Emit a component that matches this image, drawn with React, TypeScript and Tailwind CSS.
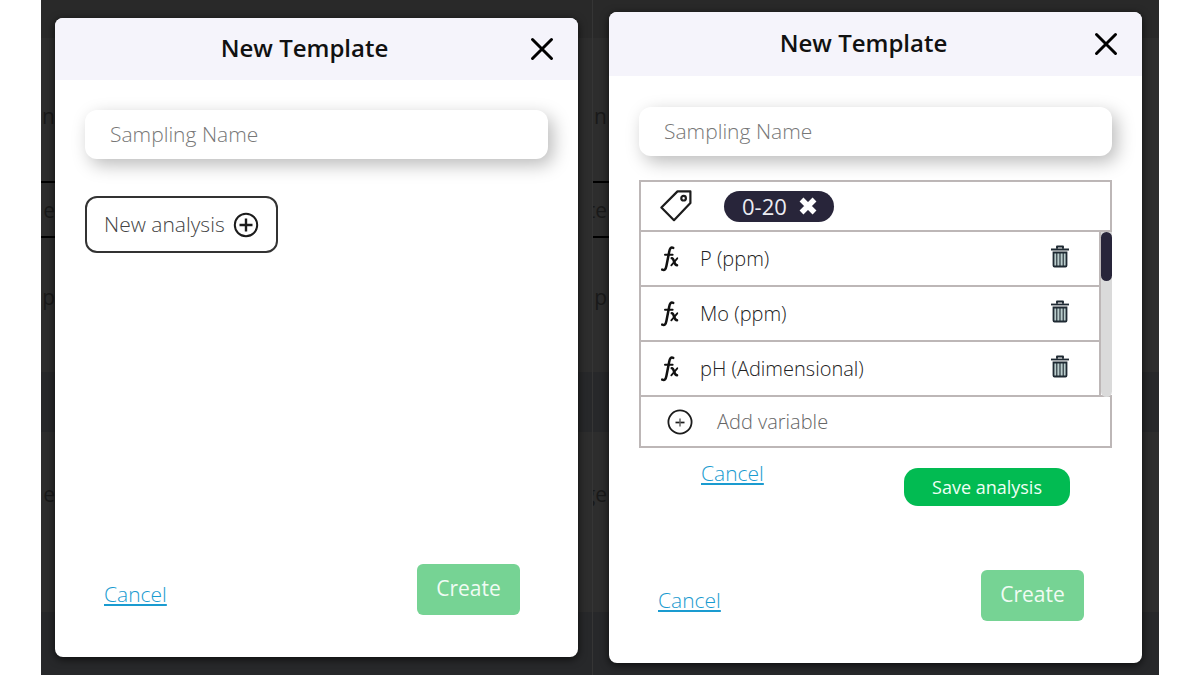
import type { ReactNode } from "react";
import { clsx } from "clsx";

const VARIABLES = ["P (ppm)", "Mo (ppm)", "pH (Adimensional)"];

function CloseIcon() {
  return (
    <svg viewBox="0 0 24 24" className="size-6" fill="none" stroke="#000" strokeWidth="3" strokeLinecap="round">
      <path d="M2.5 2.5l19 19M21.5 2.5l-19 19" />
    </svg>
  );
}

function PlusCircleIcon() {
  return (
    <svg viewBox="0 0 26 26" className="size-[26px]" fill="none" stroke="#1c1c1c">
      <circle cx="13" cy="13" r="11.2" strokeWidth="2" />
      <path d="M13 6.5v13M6.5 13h13" strokeWidth="2.4" />
    </svg>
  );
}

function SmallPlusCircleIcon() {
  return (
    <svg viewBox="0 0 26 26" className="size-[26px]" fill="none" stroke="#1c1c1c">
      <circle cx="13" cy="13" r="11.6" strokeWidth="1.8" />
      <path d="M8.5 13.5h9" strokeWidth="1.7" />
      <path d="M13 9.5v8" strokeWidth="1.5" stroke="#666" />
    </svg>
  );
}

function TagIcon() {
  return (
    <svg viewBox="0 0 32 32" className="size-8" fill="none" stroke="#1c1c1c" strokeWidth="2.2" strokeLinejoin="round">
      <path d="M1.4 17.5L17.5 1.4H30.4V13L14 30.200z" />
      <circle cx="23.600" cy="8.200" r="2.300" />
    </svg>
  );
}

function FunctionIcon() {
  return (
    <svg viewBox="0 0 18 26" className="h-[26px] w-[18px]" fill="none" stroke="#111" strokeLinecap="round">
      <path d="M1.2 23.600c2.600 1 3.600-.6 4.200-3.600L8.200 5.800C8.800 2.400 10 .9 12.200 1.900" strokeWidth="2.500" />
      <path d="M4 8.800h7.600" strokeWidth="2" />
      <path d="M10.800 12.300c2.400-.6 2 7 5.200 7" strokeWidth="2.600" />
      <path d="M16.300 12.300l-6 7" strokeWidth="1.800" />
    </svg>
  );
}

function TrashIcon() {
  return (
    <svg viewBox="0 0 18 23" className="h-[23px] w-[18px]" fill="none" stroke="#1f2a33">
      <path d="M6 3.800V1.500h6v2.300" strokeWidth="1.900" strokeLinejoin="round" />
      <path d="M0 4.500h18" strokeWidth="1.800" />
      <path d="M2.500 7.500h13v13q0 1-1 1h-11q-1 0-1-1z" strokeWidth="1.800" fill="#b9cccb" />
      <path d="M5.800 8v13M9 8v13M12.200 8v13" strokeWidth="1.100" />
    </svg>
  );
}

// Page behind the dialog, dimmed down to almost nothing
function Backdrop({ words, className }: { words: string[]; className?: string }) {
  return (
    <div
      aria-hidden="true"
      className={clsx("absolute inset-0 flex flex-col overflow-hidden bg-[#2d2d2d] text-[21px] leading-8 text-[#191919]", className)}
    >
      <div className="h-[38px] bg-[#292929]" />
      <div className="flex h-[143px] w-3.5 items-center justify-end overflow-hidden pt-3">{words[0]}</div>
      <div className="flex h-[57px] w-8 items-center border-y-2 border-black">
        <span className="flex w-3.5 justify-end overflow-hidden">{words[1]}</span>
      </div>
      <div className="flex h-[134px] w-3.5 items-center justify-end overflow-hidden pb-4">{words[2]}</div>
      <div className="h-[60px] bg-[#27282a]" />
      <div className="flex h-[180px] w-3.5 items-start justify-end overflow-hidden pt-[46px]">{words[3]}</div>
      <div className="grow bg-[#27282a]" />
    </div>
  );
}

function Dialog({ titleId, headerClass, children }: { titleId: string; headerClass: string; children: ReactNode }) {
  return (
    <section
      role="dialog"
      aria-labelledby={titleId}
      className="relative flex grow flex-col overflow-hidden rounded-lg bg-white shadow-[0_2px_8px_rgba(0,0,0,0.7)]"
    >
      <header className={clsx("flex items-center bg-[#f5f4fb] pr-6 pl-6", headerClass)}>
        <h2 id={titleId} className="grow pb-0.5 text-center text-2xl font-semibold text-[#111]">
          New Template
        </h2>
        <button type="button" aria-label="Close">
          <CloseIcon />
        </button>
      </header>
      {children}
    </section>
  );
}

function NameInput({ id }: { id: string }) {
  return (
    <>
      <label htmlFor={id} className="sr-only">
        Sampling Name
      </label>
      <input
        id={id}
        type="text"
        placeholder="Sampling Name"
        className="h-[49px] w-full rounded-xl bg-white px-[25px] pb-0.5 text-[21px] font-light shadow-[5px_6px_18px_rgba(0,0,0,0.27)] outline-none placeholder:text-[#777]"
      />
    </>
  );
}

function CancelLink() {
  return (
    <a href="#" className="text-[21px] leading-[30px] font-light text-[#1a9bd0] underline decoration-2 underline-offset-2">
      Cancel
    </a>
  );
}

function Footer() {
  return (
    <footer className="mt-auto flex items-center justify-between pr-[58px] pb-[42px] pl-[49px]">
      <div className="pt-2">
        <CancelLink />
      </div>
      <button type="button" className="h-[51px] w-[103px] rounded-md bg-[#76d394] pb-0.5 text-[21px] text-[#f0fbf3]">
        Create
      </button>
    </footer>
  );
}

function AnalysisEditor() {
  return (
    <div className="mt-6">
      <div className="flex h-[52px] items-center border-2 border-[#bdb7b7] pl-[19px]">
        <TagIcon />
        <span className="ml-8 flex h-[31px] items-center gap-3 rounded-full bg-[#28253a] pr-[17px] pl-[18px] text-[22px] text-[#ececf2]">
          0-20
          <button type="button" aria-label="Remove 0-20">
            <svg viewBox="0 0 18 18" className="size-[18px]" fill="none" stroke="#fff" strokeWidth="5.5">
              <path d="M2.500 2.500l13 13M15.500 2.500l-13 13" />
            </svg>
          </button>
        </span>
      </div>
      <div className="flex">
        <ul className="grow">
          {VARIABLES.map((name) => (
            <li key={name} className="flex h-[55px] items-center border-x-2 border-b-2 border-[#bdb7b7] pr-[30px] pl-5">
              <FunctionIcon />
              <span className="ml-[21px] grow text-xl font-light text-[#222]">{name}</span>
              <button type="button" aria-label={`Delete ${name}`} className="pb-1">
                <TrashIcon />
              </button>
            </li>
          ))}
        </ul>
        <div className="w-[11px] rounded-b-full bg-[#dadada]">
          <div className="h-[49px] rounded-full bg-[#28253a]" />
        </div>
      </div>
      {/* top border closes the box under the scrollbar */}
      <button
        type="button"
        className="-mt-0.5 flex h-[53px] w-full items-center gap-6 border-2 border-[#bdb7b7] pl-[26px] text-xl font-light text-[#666]"
      >
        <SmallPlusCircleIcon />
        Add variable
      </button>
      <div className="flex items-start justify-between pt-[10px] pr-[42px] pl-[62px]">
        <CancelLink />
        <button type="button" className="mt-[10px] h-[38px] w-[166px] rounded-[14px] bg-[#02bb52] text-lg text-[#f0fff5]">
          Save analysis
        </button>
      </div>
    </div>
  );
}

export default function App() {
  return (
    <main className="grid min-h-screen grid-cols-[551fr_567fr] bg-white px-[41px] font-['Open_Sans','Noto_Sans',sans-serif]">
      <div className="relative flex px-[14px] py-[18px]">
        <Backdrop words={["n", "e", "p", "e"]} />
        <Dialog titleId="template-title" headerClass="h-[62px]">
          <div className="px-[30px] pt-[30px]">
            <NameInput id="sampling-name" />
            <button
              type="button"
              className="mt-[37px] flex h-[57px] items-center gap-2 rounded-xl border-2 border-[#333] px-[17px] text-[21px] font-light text-[#444]"
            >
              New analysis
              <PlusCircleIcon />
            </button>
          </div>
          <Footer />
        </Dialog>
      </div>
      <div className="relative flex px-[17px] py-3">
        <Backdrop words={["n", "te", "np", "ge"]} className="border-l border-[#353535]" />
        <Dialog titleId="template-edit-title" headerClass="h-16">
          <div className="px-[30px] pt-[31px]">
            <NameInput id="sampling-name-edit" />
            <AnalysisEditor />
          </div>
          <Footer />
        </Dialog>
      </div>
    </main>
  );
}
